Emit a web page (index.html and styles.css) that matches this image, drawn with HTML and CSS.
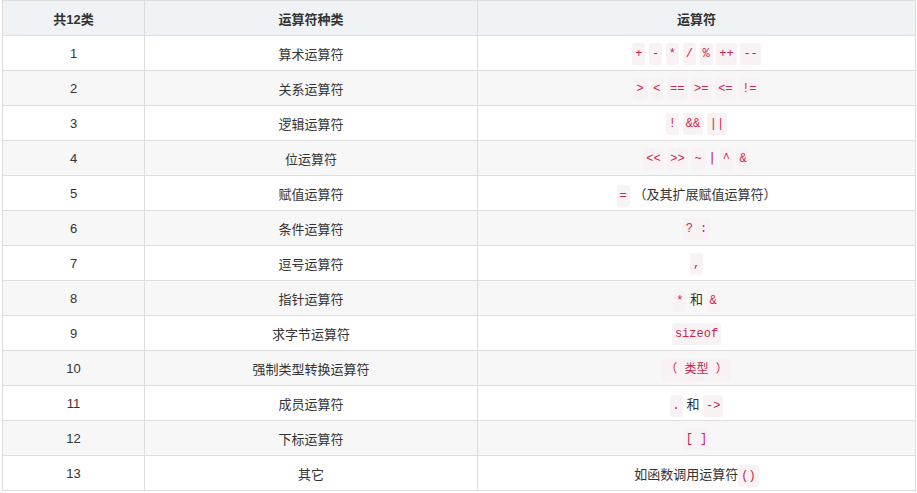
FILE: index.html
```html
<!DOCTYPE html>
<html lang="zh">
<head>
<meta charset="utf-8">
<link rel="stylesheet" href="styles.css">
</head>
<body>
<div class="wrap">
<table class="ops">
<colgroup><col class="c1"><col class="c2"><col class="c3"></colgroup>
<thead>
<tr><th>共12类</th><th>运算符种类</th><th>运算符</th></tr>
</thead>
<tbody>
<tr><td>1</td><td>算术运算符</td><td><code>+</code> <code>-</code> <code>*</code> <code>/</code> <code>%</code> <code>++</code> <code>--</code></td></tr>
<tr><td>2</td><td>关系运算符</td><td><code>&gt;</code> <code>&lt;</code> <code>==</code> <code>&gt;=</code> <code>&lt;=</code> <code>!=</code></td></tr>
<tr><td>3</td><td>逻辑运算符</td><td><code>!</code> <code>&amp;&amp;</code> <code>||</code></td></tr>
<tr><td>4</td><td>位运算符</td><td><code>&lt;&lt;</code> <code>&gt;&gt;</code> <code>~</code> <span class="bar">|</span> <code>^</code> <code>&amp;</code></td></tr>
<tr><td>5</td><td>赋值运算符</td><td><code>=</code> （及其扩展赋值运算符）</td></tr>
<tr><td>6</td><td>条件运算符</td><td><code>? :</code></td></tr>
<tr><td>7</td><td>逗号运算符</td><td><code>,</code></td></tr>
<tr><td>8</td><td>指针运算符</td><td><code>*</code> 和 <code>&amp;</code></td></tr>
<tr><td>9</td><td>求字节运算符</td><td><code>sizeof</code></td></tr>
<tr><td>10</td><td>强制类型转换运算符</td><td><code>（ 类型 ）</code></td></tr>
<tr><td>11</td><td>成员运算符</td><td><code>.</code> 和 <code>-&gt;</code></td></tr>
<tr><td>12</td><td>下标运算符</td><td><code>[ ]</code></td></tr>
<tr><td>13</td><td>其它</td><td>如函数调用运算符<code>()</code></td></tr>
</tbody>
</table>
</div>
</body>
</html>
```
FILE: styles.css
```css
html, body {
  margin: 0;
  padding: 0;
  background: #fff;
}
.wrap {
  padding: 0 2px;
}
.ops {
  border-collapse: collapse;
  table-layout: fixed;
  width: 913px;
  font-family: "Liberation Sans", "Noto Sans CJK SC", sans-serif;
  font-size: 13px;
  color: #333;
}
.c1 { width: 142px; }
.c2 { width: 333px; }
.c3 { width: 438px; }
.ops tr {
  height: 35px;
}
.ops th, .ops td {
  border: 1px solid #ddd;
  padding: 0 6px;
  text-align: center;
  vertical-align: middle;
}
.ops th {
  background: #eff3f5;
  font-weight: bold;
  color: #333;
}
.ops tbody tr:nth-child(even) td {
  background: #f7f7f7;
}
code {
  font-family: "Liberation Mono", "DejaVu Sans Mono", "Noto Sans CJK SC", monospace;
  font-size: 12px;
  color: #c7254e;
  background: #f9f2f4;
  padding: 4px 3px;
  border-radius: 3px;
}
.bar {
  font-family: "DejaVu Sans Mono", monospace;
  color: #c7254e;
  font-size: 13px;
}
```
